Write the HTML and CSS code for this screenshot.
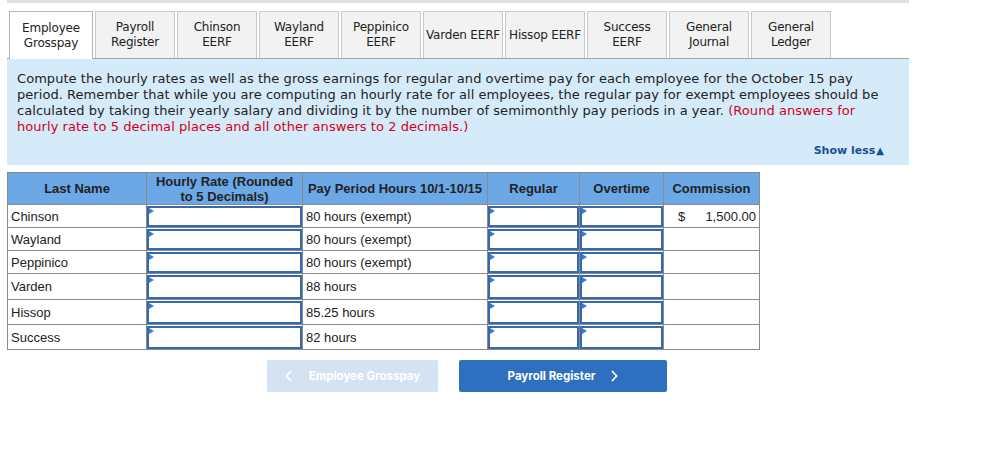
FILE: index.html
```html
<!DOCTYPE html>
<html>
<head>
<meta charset="utf-8">
<link rel="stylesheet" href="styles.css">
</head>
<body>
<div class="page">
  <div class="topbar"></div>
  <div class="tabs">
    <div class="tab active">Employee<br>Grosspay</div>
    <div class="tab">Payroll<br>Register</div>
    <div class="tab">Chinson<br>EERF</div>
    <div class="tab">Wayland<br>EERF</div>
    <div class="tab">Peppinico<br>EERF</div>
    <div class="tab">Varden EERF</div>
    <div class="tab">Hissop EERF</div>
    <div class="tab">Success<br>EERF</div>
    <div class="tab">General<br>Journal</div>
    <div class="tab">General<br>Ledger</div>
  </div>
  <div class="panel">
    <p class="instr">Compute the hourly rates as well as the gross earnings for regular and overtime pay for each employee for the October 15 pay<br>period. Remember that while you are computing an hourly rate for all employees, the regular pay for exempt employees should be<br>calculated by taking their yearly salary and dividing it by the number of semimonthly pay periods in a year. <span class="red">(Round answers for<br>hourly rate to 5 decimal places and all other answers to 2 decimals.)</span></p>
    <div class="showless">Show less<span class="tri">▲</span></div>
  </div>
  <table class="grid">
    <colgroup>
      <col class="c1"><col class="c2"><col class="c3"><col class="c4"><col class="c5"><col class="c6">
    </colgroup>
    <thead>
      <tr>
        <th>Last Name</th>
        <th class="two">Hourly Rate (Rounded<br>to 5 Decimals)</th>
        <th>Pay Period Hours 10/1-10/15</th>
        <th>Regular</th>
        <th>Overtime</th>
        <th>Commission</th>
      </tr>
    </thead>
    <tbody>
      <tr class="r23">
        <td>Chinson</td><td class="in"><div class="box"></div></td><td>80 hours (exempt)</td><td class="in"><div class="box"></div></td><td class="in"><div class="box"></div></td>
        <td><div class="money"><span>$</span><span>1,500.00</span></div></td>
      </tr>
      <tr class="r23">
        <td>Wayland</td><td class="in"><div class="box"></div></td><td>80 hours (exempt)</td><td class="in"><div class="box"></div></td><td class="in"><div class="box"></div></td><td></td>
      </tr>
      <tr class="r23">
        <td>Peppinico</td><td class="in"><div class="box"></div></td><td>80 hours (exempt)</td><td class="in"><div class="box"></div></td><td class="in"><div class="box"></div></td><td></td>
      </tr>
      <tr class="r26">
        <td>Varden</td><td class="in"><div class="box"></div></td><td>88 hours</td><td class="in"><div class="box"></div></td><td class="in"><div class="box"></div></td><td></td>
      </tr>
      <tr class="r25">
        <td>Hissop</td><td class="in"><div class="box"></div></td><td>85.25 hours</td><td class="in"><div class="box"></div></td><td class="in"><div class="box"></div></td><td></td>
      </tr>
      <tr class="r25">
        <td>Success</td><td class="in"><div class="box"></div></td><td>82 hours</td><td class="in"><div class="box"></div></td><td class="in"><div class="box"></div></td><td></td>
      </tr>
    </tbody>
  </table>
  <div class="nav">
    <div class="btn prev"><svg class="chev left" width="8" height="12" viewBox="0 0 8 12"><path d="M6 1 L1.5 6 L6 11" fill="none" stroke="#fff" stroke-width="1.8"/></svg>Employee Grosspay</div>
    <div class="btn next">Payroll Register<svg class="chev right" width="8" height="12" viewBox="0 0 8 12"><path d="M2 1 L6.5 6 L2 11" fill="none" stroke="#fff" stroke-width="1.8"/></svg></div>
  </div>
</div>
</body>
</html>
```
FILE: styles.css
```css
html, body {
  margin: 0;
  padding: 0;
  background: #fff;
}
.page {
  padding-left: 7px;
  width: 902px;
  font-family: "DejaVu Sans", Verdana, sans-serif;
}
.topbar {
  height: 3px;
  background: #e0e0e0;
}
.tabs {
  display: flex;
  align-items: flex-end;
  padding-top: 8px;
  padding-left: 2px;
  gap: 2px;
}
.tab {
  box-sizing: border-box;
  width: 80px;
  height: 47px;
  background: #f2f2f2;
  border: 1px solid #c9c9c9;
  border-bottom: none;
  display: flex;
  align-items: center;
  justify-content: center;
  text-align: center;
  font-size: 12px;
  line-height: 15px;
  color: #222;
  white-space: nowrap;
  letter-spacing: -0.2px;
}
.tab.active {
  width: 84px;
  background: #fff;
  border-color: #b5b5b5;
  height: 48px;
  margin-bottom: -1px;
  position: relative;
}
.panel {
  border-top: 1px solid #a3a3a3;
  background: #d6ebf9;
  padding: 12px 10px 0 10px;
  box-sizing: border-box;
  height: 107px;
  display: flex;
  flex-direction: column;
}
.instr {
  margin: 0;
  font-size: 13px;
  line-height: 16px;
  color: #222;
  white-space: nowrap;
  letter-spacing: 0.05px;
}
.red {
  color: #d0021b;
}
.showless {
  align-self: flex-end;
  margin-top: 9px;
  margin-right: 15px;
  font-size: 11px;
  font-weight: bold;
  color: #1b4f93;
}
.tri {
  font-size: 10px;
  margin-left: 1px;
}
.grid {
  margin-top: 7px;
  border-collapse: collapse;
  width: 752px;
  font-family: "Liberation Sans", Arial, sans-serif;
  font-size: 13px;
  color: #222;
  table-layout: fixed;
}
.c1 { width: 139px; }
.c2 { width: 156px; }
.c3 { width: 185px; }
.c4 { width: 92px; }
.c5 { width: 84px; }
.c6 { width: 96px; }
.grid th {
  background: #6ca8e6;
  border: 1px solid #8a8a8a;
  height: 32px;
  padding: 0;
  font-weight: bold;
  font-size: 13px;
  color: #222;
  box-sizing: border-box;
  white-space: nowrap;
}
.grid th.two {
  line-height: 15px;
  padding-bottom: 0;
}
.grid td {
  border: 1px solid #8a8a8a;
  padding: 0 3px;
  box-sizing: border-box;
  white-space: nowrap;
}
.r23 td { height: 23px; }
.r26 td { height: 26px; }
.r25 td { height: 25px; }
.grid td.in {
  padding: 1px 0 0 0;
  position: relative;
}
.box {
  box-sizing: border-box;
  height: calc(100% - 1px);
  min-height: 21px;
  border: 2px solid #3569ad;
  background: #fff;
  position: relative;
}
.r26 .box { min-height: 24px; }
.r25 .box { min-height: 23px; }
.box::before {
  content: "";
  position: absolute;
  left: 0;
  top: 0;
  border-left: 5px solid #3b7dd1;
  border-top: 3px solid transparent;
  border-bottom: 3px solid transparent;
}
.money {
  display: flex;
  justify-content: space-between;
  padding-left: 11px;
}
.nav {
  display: flex;
  gap: 21px;
  margin-top: 10px;
  margin-left: 260px;
}
.btn {
  height: 32px;
  border-radius: 2px;
  display: flex;
  align-items: center;
  justify-content: center;
  font-family: Inter, "Liberation Sans", sans-serif;
  font-weight: 700;
  font-size: 11.5px;
  color: #fff;
}
.prev {
  width: 171px;
  background: #d5e2f2;
}
.next {
  width: 208px;
  background: #2e6fbf;
}
.chev.left { margin-right: 16px; }
.chev.right { margin-left: 15px; }
```
